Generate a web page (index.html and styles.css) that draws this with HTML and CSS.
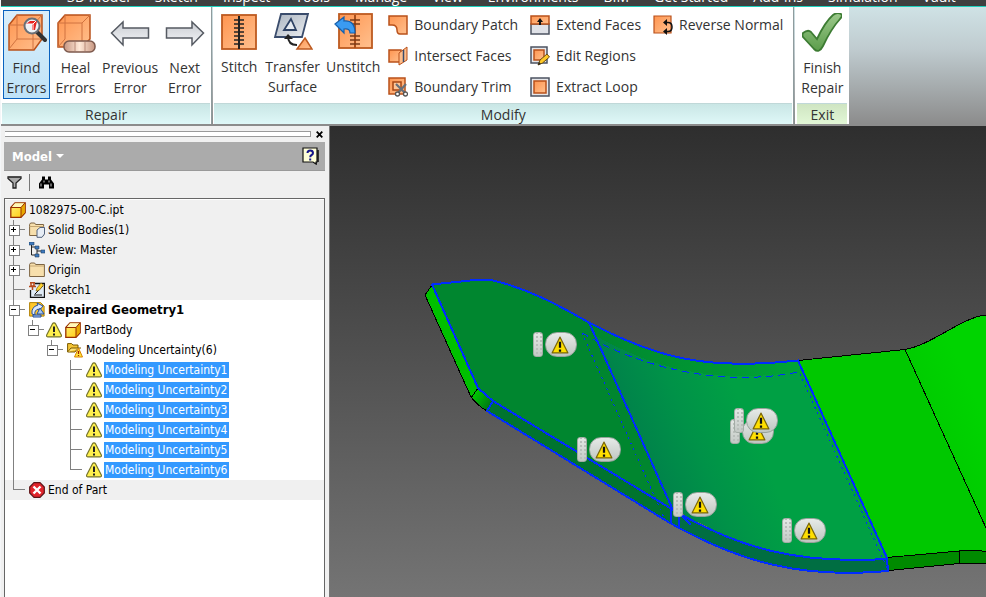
FILE: index.html
```html
<!DOCTYPE html>
<html lang="en">
<head>
<meta charset="utf-8">
<title>Repair – 1082975-00-C.ipt</title>
<link rel="stylesheet" href="styles.css">
</head>
<body>
<svg class="defs" aria-hidden="true">
  <defs>
    <linearGradient id="orange" x1="0" y1="0" x2="1" y2="1"><stop offset="0" stop-color="#ff9550"/><stop offset="1" stop-color="#ffc08e"/></linearGradient>
    <linearGradient id="silver" x1="0" y1="0" x2="1" y2="1"><stop offset="0" stop-color="#aab4c0"/><stop offset="1" stop-color="#eceef1"/></linearGradient>
    <linearGradient id="arrow" x1="0" y1="0" x2="0" y2="1"><stop offset="0" stop-color="#c9ccd2"/><stop offset="1" stop-color="#f4f5f7"/></linearGradient>
    <linearGradient id="tick" x1="0" y1="0" x2="0" y2="1"><stop offset="0" stop-color="#9cc98b"/><stop offset="1" stop-color="#5c9d4b"/></linearGradient>
    <linearGradient id="band" x1="0" y1="0" x2="1" y2="0"><stop offset="0" stop-color="#c69580"/><stop offset=".5" stop-color="#ffe9d8"/><stop offset="1" stop-color="#c69580"/></linearGradient>
    <linearGradient id="gold" x1="0" y1="0" x2="1" y2="1"><stop offset="0" stop-color="#fff27a"/><stop offset="1" stop-color="#ffc90a"/></linearGradient>
    <linearGradient id="bend" gradientUnits="userSpaceOnUse" x1="620" y1="450" x2="740" y2="400"><stop offset="0" stop-color="#007c4b"/><stop offset=".55" stop-color="#009248"/><stop offset="1" stop-color="#00a044"/></linearGradient>
    <linearGradient id="bendedge" gradientUnits="userSpaceOnUse" x1="590" y1="0" x2="790" y2="0"><stop offset="0" stop-color="#00862f"/><stop offset="1" stop-color="#00a336"/></linearGradient>
    <linearGradient id="corner" gradientUnits="userSpaceOnUse" x1="474" y1="394" x2="492" y2="406"><stop offset="0" stop-color="#00c800"/><stop offset="1" stop-color="#006e18"/></linearGradient>
    <linearGradient id="far" gradientUnits="userSpaceOnUse" x1="920" y1="450" x2="986" y2="420"><stop offset="0" stop-color="#00c800"/><stop offset="1" stop-color="#00d400"/></linearGradient>
    <symbol id="warn" viewBox="0 0 16 16"><path d="M8 .8q1 0 1.500 1L15.300 13q.6 1.700-1 1.900H1.700Q.1 14.700.7 13L6.500 1.800Q7 .8 8 .8z" fill="#fff04d" stroke="#77752c" stroke-width="1.200"/><path d="M7 4.500h2v5.500H7zM7 11.500h2v2H7z" fill="#222"/></symbol>
    <symbol id="warn2" viewBox="0 0 16 16"><path d="M8 1l7 14H1z" fill="#ffdf00" stroke="#7a6708" stroke-linejoin="round"/><path d="M7 5h2v5.500H7zM7 12h2v2H7z" fill="#111"/></symbol>
    <symbol id="part" viewBox="0 0 16 16"><path d="M.8 5.500L5 .8h10.200v10L11 15.300H.8z" fill="url(#gold)" stroke="#983000" stroke-width="1.300"/><path d="M5 1.300h9.500L11 5.500H1.500z" fill="#fff8b8"/><path d="M11 5.500l3.800-4.200v9.200L11 14.800z" fill="#e8a900"/><path d="M.8 5.500H11v9.800M11 5.500L15 .8" fill="none" stroke="#983000"/></symbol>
  </defs>
</svg>

<nav class="tabs">
  <a href="#">3D Model</a><a href="#">Sketch</a><a href="#">Inspect</a><a href="#">Tools</a><a href="#">Manage</a><a href="#">View</a><a href="#">Environments</a><a href="#">BIM</a><a href="#">Get Started</a><a href="#">Add-Ins</a><a href="#">Simulation</a><a href="#">Vault</a>
</nav>

<header class="ribbon">
  <section class="panel repair">
    <div class="tools">
      <button class="big active">
        <svg viewBox="0 0 40 40"><path d="M2 12L10 2h25v24l-8 11H2z" fill="url(#orange)" stroke="#b9511b" stroke-width="1.500"/><path d="M2 12h24v24M26 12l9-10M10 2v24L2 36M10 26h24" fill="none" stroke="#d07340"/><path d="M30 19l8 8" stroke="#333" stroke-width="4" stroke-linecap="round"/><circle cx="25" cy="13" r="7.500" fill="#eef2f5" stroke="#6b6f75" stroke-width="2"/><path d="M19 11l4-3h7l-2 9h-3v-6z" fill="#e8231f"/><path d="M20 11h6l3-3M26 11v6" fill="none" stroke="#fff"/></svg>
        <span>Find<br>Errors</span>
      </button>
      <button class="big">
        <svg viewBox="0 0 40 40"><path d="M2 10L9 2h25v24l-8 8H2z" fill="url(#orange)" stroke="#b9511b" stroke-width="1.500"/><path d="M2 10h24v24M26 10l8-8M9 2v24L2 34" fill="none" stroke="#d07340"/><rect x="8" y="28" width="31" height="11" rx="5" fill="url(#band)" stroke="#7d5a4e" stroke-width="1.500"/><path d="M19 29v9M29 29v9" stroke="#b88a78"/></svg>
        <span>Heal<br>Errors</span>
      </button>
      <button class="big">
        <svg viewBox="0 0 40 40"><path d="M1.500 20L13 9v6h25.500v10H13v7z" fill="url(#arrow)" stroke="#555a62" stroke-width="1.500"/></svg>
        <span>Previous<br>Error</span>
      </button>
      <button class="big">
        <svg viewBox="0 0 40 40"><path d="M38.500 20L27 9v6H1.500v10H27v7z" fill="url(#arrow)" stroke="#555a62" stroke-width="1.500"/></svg>
        <span>Next<br>Error</span>
      </button>
    </div>
    <h2>Repair</h2>
  </section>

  <section class="panel modify">
    <div class="tools">
      <button class="big">
        <svg viewBox="0 0 40 40"><rect x="3" y="3" width="34" height="34" fill="url(#orange)" stroke="#bd5a20" stroke-width="1.800"/><path d="M20 4v33" stroke="#222" stroke-width="2"/><path d="M15 8h10M15 12h10M15 16h10M15 20h10M15 24h10M15 28h10M15 32h10" stroke="#222" stroke-width="1.500"/></svg>
        <span>Stitch</span>
      </button>
      <button class="big">
        <svg viewBox="0 0 40 40"><path d="M8 2h27l-6 23H2z" fill="url(#silver)" stroke="#3a4c6c" stroke-width="1.800"/><path d="M18 7l5 11H11z" fill="#e7ebf0" stroke="#2e4264" stroke-width="1.800"/><path d="M32 26l7 11H24z" fill="url(#orange)" stroke="#bd5a20" stroke-width="1.500"/><path d="M15 24q0 9 9 9" fill="none" stroke="#222" stroke-width="2"/><path d="M11 27l4-5 5 5z" fill="#222"/></svg>
        <span>Transfer<br>Surface</span>
      </button>
      <button class="big">
        <svg viewBox="0 0 40 40"><rect x="6" y="2" width="33" height="34" fill="url(#orange)" stroke="#bd5a20" stroke-width="1.800"/><path d="M22 3v33" stroke="#a94f1c" stroke-width="2"/><path d="M17 8h10M17 12h10M17 24h10M17 28h10M17 32h10" stroke="#7a3b19" stroke-width="1.500"/><path d="M2 12l9-7v4q11-1 11 12h-5q0-5-6-4v4z" fill="#3a9bf2" stroke="#1560ad" stroke-width="1.200"/></svg>
        <span>Unstitch</span>
      </button>
      <div class="stack">
        <button class="small"><svg viewBox="0 0 20 20"><path d="M1 1h18v18h-7q-3 0-3-4 0-5-5-5H1z" fill="url(#orange)" stroke="#b9511b" stroke-width="1.500"/></svg>Boundary Patch</button>
        <button class="small"><svg viewBox="0 0 20 20"><path d="M1 4h12v12H1z" fill="url(#orange)" stroke="#b9511b" stroke-width="1.500"/><path d="M11 7l8-6v13l-8 5z" fill="#ffbd8a" stroke="#b9511b"/><path d="M15.500 4v12" stroke="#3a4c6c" stroke-width="1.500"/></svg>Intersect Faces</button>
        <button class="small"><svg viewBox="0 0 20 20"><path d="M1 1h16v16H1z" fill="url(#orange)" stroke="#b9511b" stroke-width="1.500"/><path d="M5 5h8v8H5z" fill="#ffc596" stroke="#a74614" stroke-width="1.500"/><path d="M8 7l9 9M18 7l-8 9" stroke="#68707a" stroke-width="2.200"/><circle cx="9.500" cy="17" r="2" fill="#fff" stroke="#555" stroke-width="1.300"/><circle cx="17.500" cy="17" r="2" fill="#fff" stroke="#555" stroke-width="1.300"/></svg>Boundary Trim</button>
      </div>
      <div class="stack">
        <button class="small"><svg viewBox="0 0 20 20"><path d="M1 9h18v10H1z" fill="#dfe1e7" stroke="#4c5361" stroke-width="1.500"/><path d="M1 1h18v8H1z" fill="url(#orange)" stroke="#b9511b" stroke-width="1.500"/><path d="M10 3l3 4h-2v3H9V7H7z" fill="#111"/></svg>Extend Faces</button>
        <button class="small"><svg viewBox="0 0 20 20"><path d="M1 1h16v16H1z" fill="#e6e7ea" stroke="#4c5361" stroke-width="1.500"/><path d="M4 4h10v10H4z" fill="url(#orange)" stroke="#b9511b" stroke-width="1.500"/><path d="M8 19l2-5 7-6 2.500 3-7 6z" fill="#ffc928" stroke="#684c12"/><path d="M8 19l1-3 2 2z" fill="#222"/></svg>Edit Regions</button>
        <button class="small"><svg viewBox="0 0 20 20"><path d="M1 1h18v18H1z" fill="#e6e7ea" stroke="#4c5361" stroke-width="1.500"/><path d="M4 4h12v12H4z" fill="url(#orange)" stroke="#b9511b" stroke-width="1.500"/></svg>Extract Loop</button>
      </div>
      <div class="stack">
        <button class="small"><svg viewBox="0 0 20 20"><path d="M1 1h17v17H1z" fill="url(#orange)" stroke="#b9511b" stroke-width="1.200"/><path d="M13 7.500h2q4 0 4 4.500t-4 4.500h-2" fill="none" stroke="#111" stroke-width="1.500"/><path d="M14 4v7l-4-3.500zM14 13v7l-4-3.500z" fill="#111"/></svg>Reverse Normal</button>
      </div>
    </div>
    <h2>Modify</h2>
  </section>

  <section class="panel exit">
    <div class="tools">
      <button class="big">
        <svg viewBox="0 0 40 40"><path d="M1 20q5-4 8-1l6 7Q23 9 31 2q4-3 8-1 2 2-1 5-9 10-17 27-4 8-9 3L1 24q-1-2 0-4z" fill="url(#tick)" stroke="#3d7c33" stroke-width="1.800"/></svg>
        <span>Finish<br>Repair</span>
      </button>
    </div>
    <h2>Exit</h2>
  </section>
</header>

<main>
  <aside class="browser">
    <div class="grip"><i></i><button aria-label="Close"><svg viewBox="0 0 7 7"><path d="M.7.7l5.600 5.600M6.300.7L.7 6.300" stroke="#000" stroke-width="1.800"/></svg></button></div>
    <div class="head">
      <button class="title">Model<svg viewBox="0 0 8 4"><path d="M0 0h8L4 4z" fill="#fff"/></svg></button>
      <button class="help" aria-label="Help"><svg viewBox="0 0 18 18"><path d="M3 3h14v12h-2v3l-4-3H3z" fill="#333"/><path d="M1 1h14v14h-1v2l-3-2H1z" fill="#ffffd8" stroke="#111" stroke-width="1.200"/><path d="M5.500 6q0-2.500 2.700-2.500T11 6q0 1.300-1.400 2T8.200 10.200" fill="none" stroke="#171789" stroke-width="2"/><path d="M7.200 11.500h2v2h-2z" fill="#171789"/></svg></button>
    </div>
    <div class="filters">
      <button aria-label="Filter"><svg viewBox="0 0 15 15"><path d="M1 2h13v1.500L9 8v5H6V8L1 3.500z" fill="#aaa" stroke="#222" stroke-width="1.300"/><path d="M1 2h13" stroke="#444"/></svg></button>
      <button aria-label="Find"><svg viewBox="0 0 15 14"><path d="M3 1h3v3h3V1h3v3l3 4v5h-5V9H5v4H0V8l3-4z" fill="#000"/><path d="M2 8v3M12 8v3M5 5v2M10 5v2" stroke="#fff" stroke-width=".8"/></svg></button>
    </div>
    <ul class="tree">
      <li><svg><use href="#part"/></svg><span>1082975-00-C.ipt</span></li>
      <li><i class="g tee plus"></i><svg viewBox="0 0 16 16"><path d="M.6 13.500V2.500l1-1.500h4l1 1.500h8v11z" fill="#f7dfac" stroke="#7d6544"/><path d="M.6 4.500h14" stroke="#c5a672"/><path d="M8 8l3-2.500h4.500V12L13 15.300H8z" fill="#e7edf5" stroke="#53637d"/></svg><span>Solid Bodies(1)</span></li>
      <li><i class="g tee plus"></i><svg viewBox="0 0 16 16"><path d="M2.500 2v11h4M2.500 5h4M8 5v8M8 9h5" fill="none" stroke="#222"/><path d="M0 0h5v3H0zM6 4h4v3H6zM12 8h4v3h-4zM6 12h4v3H6z" fill="#3c7ac0" stroke="#24415f" stroke-width=".6"/></svg><span>View: Master</span></li>
      <li><i class="g tee plus"></i><svg viewBox="0 0 16 16"><path d="M.6 14.500v-12l1-1.500h4l1 1.500h8.800v12z" fill="#f7dfac" stroke="#7d6544"/><path d="M1 4h14" stroke="#c5a672"/></svg><span>Origin</span></li>
      <li><i class="g tee"></i><svg viewBox="0 0 16 16"><path d="M1.500 8v7.400h14V1.500H6" fill="#dfeaf5" stroke="#111" stroke-width="1.300"/><path d="M6 12l8-8M5 13h8" stroke="#111"/><path d="M7 9l1-3 4-5 2.500 2-4 5z" fill="#ffd431" stroke="#876310" stroke-width=".7"/><path d="M1 .8h5M2 1v3h3V1M0 4.500h7M3.500 5v3" fill="none" stroke="#b5481c" stroke-width="1.500"/></svg><span>Sketch1</span></li>
      <li class="open bold"><i class="g tee minus"></i><svg viewBox="0 0 16 16"><path d="M.6.6h11l3.500 3.500v10H.6z" fill="#ffc72b" stroke="#b38307"/><path d="M3 12q-1-7 6-9l-1-2 6 3-4 5-.5-2Q5 8 6 13z" fill="#dbe7fa" stroke="#244f9e"/><path d="M8 12l3-6 4 6zM4 13h8v2H4z" fill="#a7c6f0" stroke="#244f9e"/></svg><span>Repaired Geometry1</span></li>
      <li class="open tight"><i class="g pass"></i><i class="g last minus"></i><svg><use href="#warn"/></svg><svg><use href="#part"/></svg><span>PartBody</span></li>
      <li class="open"><i class="g pass"></i><i class="g"></i><i class="g last minus"></i><svg viewBox="0 0 16 16"><path d="M.6 10V1.600h4L6 3h5v3l-3 4z" fill="#f4c536" stroke="#7a5900"/><path d="M.6 10L4 6h10" fill="#ffe47a" stroke="#7a5900"/><path d="M11.500 6l4 9h-8z" fill="#ffe839" stroke="#d98000"/><path d="M11.500 9v3M11.500 13v1" stroke="#a31d00" stroke-width="1.300"/></svg><span>Modeling Uncertainty(6)</span></li>
      <li class="open sel"><i class="g pass"></i><i class="g"></i><i class="g"></i><i class="g tee"></i><svg><use href="#warn"/></svg><span>Modeling Uncertainty1</span></li>
      <li class="open sel"><i class="g pass"></i><i class="g"></i><i class="g"></i><i class="g tee"></i><svg><use href="#warn"/></svg><span>Modeling Uncertainty2</span></li>
      <li class="open sel"><i class="g pass"></i><i class="g"></i><i class="g"></i><i class="g tee"></i><svg><use href="#warn"/></svg><span>Modeling Uncertainty3</span></li>
      <li class="open sel"><i class="g pass"></i><i class="g"></i><i class="g"></i><i class="g tee"></i><svg><use href="#warn"/></svg><span>Modeling Uncertainty4</span></li>
      <li class="open sel"><i class="g pass"></i><i class="g"></i><i class="g"></i><i class="g tee"></i><svg><use href="#warn"/></svg><span>Modeling Uncertainty5</span></li>
      <li class="open sel"><i class="g pass"></i><i class="g"></i><i class="g"></i><i class="g last"></i><svg><use href="#warn"/></svg><span>Modeling Uncertainty6</span></li>
      <li><i class="g last"></i><svg viewBox="0 0 16 16"><path d="M5 .7h6L15.300 5v6L11 15.300H5L.7 11V5z" fill="#e0242b" stroke="#5b1216" stroke-width="1.200"/><path d="M4.500 4.500l7 7M11.500 4.500l-7 7" stroke="#fff" stroke-width="2.400"/></svg><span>End of Part</span></li>
    </ul>
  </aside>

  <div class="viewport">
    <svg class="scene" viewBox="330 126 656 471" preserveAspectRatio="xMinYMin slice" shape-rendering="crispEdges">
      <path d="M798 360.500L905 349.500L986 528V551.500L975 550L887 558z" fill="#00c800"/>
      <path d="M905 349.500C932 345 962 317 986 315V528z" fill="url(#far)"/>
      <path d="M887 558L959 551H986V563H959L888 571z" fill="#008a00"/>
      <path d="M432 285L425 295L471 397L478 389z" fill="#00c000"/>
      <path d="M478 388L471 397Q478 406 487 411L493 401z" fill="url(#corner)"/>
      <path d="M432 284.500L475 280H491C527 288 558 305 589 322.500L672 508L493 401L478 388z" fill="#00862f"/>
      <path d="M589 322.500C660 360 710 370 798 360.500L887 559C800 565 740 548 672 508z" fill="url(#bendedge)"/>
      <path d="M594 335C650 366 705 385 798 372L887 559C800 565 740 548 672 508z" fill="url(#bend)"/>
      <path d="M493 401L670 508V523L487 411z" fill="#00742f"/>
      <path d="M670 508C740 550 800 564 887 559L888 571C800 579 740 562 670 523z" fill="#006e42"/>
      <g fill="none" stroke="#000" stroke-width="1">
        <path d="M432 285L425 295L471 397Q478 406 487 411M478 388L471 398"/>
        <path d="M798 360.500L905 349.500C932 345 962 317 986 315M905 349.500L986 528M887 557.500L959 551L975 550L986 551.500M889 570.500L959 563.500H986M959.500 551V563"/>
      </g>
      <g fill="none" stroke="#002cff" stroke-width="2">
        <path d="M493 401L478 388L432 284.500L475 280H491C527 288 558 305 589 322.500C660 360 710 370 798 360.500L887 558L888 571C800 579 740 562 670 523L487 411L493 401L670 508C740 550 800 564 887 559"/>
        <path d="M589 322.500L672 508M670.500 508V523M678.500 516V528M682 516L691 525"/>
      </g>
      <g fill="none" stroke="#002cff" stroke-width="1">
        <path d="M582 333L608 347C660 371 730 386 798 372" stroke-dasharray="7 5"/>
        <path d="M582 333L665 520M800 374L887 568" stroke-dasharray="2 4"/>
      </g>
    </svg>
    <button class="marker m1" aria-label="Modeling Uncertainty1"><i></i><b><svg><use href="#warn2"/></svg></b></button>
    <button class="marker m2" aria-label="Modeling Uncertainty2"><i></i><b><svg><use href="#warn2"/></svg></b></button>
    <button class="marker m3" aria-label="Modeling Uncertainty3"><i></i><b><svg><use href="#warn2"/></svg></b></button>
    <button class="marker m4" aria-label="Modeling Uncertainty4"><i></i><b><svg><use href="#warn2"/></svg></b></button>
    <button class="marker m5" aria-label="Modeling Uncertainty5"><i></i><b><svg><use href="#warn2"/></svg></b></button>
    <button class="marker m6" aria-label="Modeling Uncertainty6"><i></i><b><svg><use href="#warn2"/></svg></b></button>
  </div>
</main>
</body>
</html>
```
FILE: styles.css
```css
* { box-sizing: border-box; }

body {
  margin: 0;
  padding-left: 1px;
  min-height: 100vh;
  display: flex;
  flex-direction: column;
  background: #f4f6f8;
  color: #333;
  font-family: "Open Sans", "Noto Sans", sans-serif;
  font-size: 14px;
}

button {
  margin: 0;
  padding: 0;
  border: 0;
  background: none;
  color: inherit;
  font: inherit;
}

svg { display: block; flex: none; }
.defs { position: absolute; width: 0; height: 0; }

/* tab strip */
.tabs {
  height: 7px;
  display: flex;
  align-items: flex-end;
  gap: 25px;
  padding-left: 66px;
  overflow: hidden;
  background: #3f3f3f;
  border-bottom: 1px solid #1fd0bd;
}
.tabs a {
  flex: none;
  line-height: 18px;
  color: #fff;
  text-decoration: none;
  white-space: nowrap;
}

/* ribbon */
.ribbon {
  display: flex;
  gap: 1px;
  border-bottom: 2px solid #8c8c8c;
  background: linear-gradient(#cfe2e5, #c0ccd0 35%, #8c8c8c);
}
.panel {
  display: flex;
  flex-direction: column;
  background: #fff;
  padding: 0 1px;
  border-right: 1px solid #8f9c9e;
}
.panel h2 {
  margin: 0;
  height: 21px;
  line-height: 22px;
  font-size: 14px;
  font-weight: 400;
  text-align: center;
  border-top: 1px solid #c0d8d8;
  background: linear-gradient(#c9e6e5, #dff8f8);
}
.exit { border-right: 0; padding: 0 2px; }
.exit h2 { background: linear-gradient(#cfe5c2, #e2f7d6); }
.tools {
  height: 96px;
  display: flex;
  align-items: flex-start;
  padding-top: 3px;
}
.big {
  display: flex;
  flex-direction: column;
  align-items: center;
  height: 89px;
  padding-top: 2px;
  line-height: 20px;
  border: 1px solid transparent;
}
.big svg { width: 40px; height: 40px; margin-bottom: 5px; }
.big.active {
  border-color: #0a62bf;
  background: linear-gradient(#d9eefa, #bfe3f8);
}
.repair .tools { gap: 2px; padding-left: 1px; padding-right: 2px; }
.repair .big { min-width: 47px; }
.modify .tools { gap: 4px; padding: 2px 4px 0; }
.exit .tools { padding-left: 3px; padding-right: 3px; }
.stack { display: flex; flex-direction: column; margin-left: 3px; margin-right: 5px; }
.small {
  display: flex;
  align-items: center;
  gap: 6px;
  height: 31px;
  white-space: nowrap;
}
.small svg { width: 20px; height: 20px; }

/* model browser */
main { flex: 1; display: flex; }
.browser {
  width: 328px;
  flex: none;
  display: flex;
  flex-direction: column;
  padding: 0 4px 0 3px;
  background: #f0f0f0;
  color: #000;
  font-family: "DejaVu Sans Condensed", "DejaVu Sans", sans-serif;
  font-size: 12px;
}
.grip {
  height: 16px;
  display: flex;
  align-items: center;
  gap: 5px;
  padding: 0 2px 0 1px;
}
.grip i { flex: 1; height: 6px; border: 1px solid #999; border-left: 0; background: #fff; }
.grip svg { width: 7px; height: 7px; }
.head {
  height: 29px;
  display: flex;
  align-items: center;
  justify-content: space-between;
  padding: 0 5px 0 8px;
  background: #ababab;
  border-bottom: 1px solid #999;
}
.title {
  display: flex;
  align-items: center;
  gap: 4px;
  color: #fff;
  font-size: 13px;
  font-weight: 700;
}
.title svg { width: 8px; height: 4px; }
.help svg { width: 18px; height: 18px; }
.filters { height: 27px; display: flex; align-items: center; padding: 0 0 4px 3px; }
.filters button { padding-right: 7px; }
.filters button + button { padding: 1px 0 1px 9px; border-left: 1px solid #777; }
.filters svg { width: 15px; height: 15px; }

.tree {
  flex: 1;
  margin: 0;
  padding: 1px 0 0;
  list-style: none;
  background: #fff;
  border: 1px solid #666;
  border-bottom: 0;
}
.tree li {
  height: 20px;
  display: flex;
  align-items: center;
  background: #f0f0f0;
  white-space: nowrap;
}
.tree li.open { background: #fff; }
.tree svg { width: 16px; height: 16px; margin-left: 5px; }
.tree .tight svg { margin-left: 3px; }
.tree span { margin-left: 2px; padding: 0 0 0 1px; line-height: 16px; }
.bold { font-weight: 700; font-size: 13px; }
.tree .sel span { background: #39f; color: #fff; padding: 0 2px 0 1px; }

/* tree guides: one cell per level, its line 8px from the left */
.g { position: relative; width: 19px; height: 20px; flex: none; }
.pass, .tee { background: linear-gradient(#808080, #808080) 8px 0 / 1px 100% no-repeat; }
.last { background: linear-gradient(#808080, #808080) 8px 0 / 1px 10px no-repeat; }
.tee::before, .last::before {
  content: "";
  position: absolute;
  left: 8px;
  top: 9px;
  width: 12px;
  height: 1px;
  background: #808080;
}
.plus::after, .minus::after {
  content: "";
  position: absolute;
  left: 4px;
  top: 5px;
  width: 9px;
  height: 9px;
  border: 1px solid #808080;
}
.plus::after {
  background:
    linear-gradient(#000, #000) 3px 1px / 1px 5px no-repeat,
    linear-gradient(#000, #000) 1px 3px / 5px 1px no-repeat, #fff;
}
.minus::after { background: linear-gradient(#000, #000) 1px 3px / 5px 1px no-repeat, #fff; }

/* model view */
.viewport {
  position: relative;
  flex: 1;
  min-width: 0;
  overflow: hidden;
  border-left: 1px solid #777;
  background: linear-gradient(#2e2e2e, #747474);
}
.scene { position: absolute; inset: 0; width: 100%; height: 100%; }
.marker { position: absolute; display: flex; gap: 2px; }
.marker i {
  width: 10px;
  height: 25px;
  border: 1px solid #a3ada6;
  border-radius: 3px;
  background: radial-gradient(circle, #b9bfbb 1px, transparent 1px) 1px 2px / 4px 4px, linear-gradient(#e4e8e5, #c3c9c5);
}
.marker b {
  display: flex;
  justify-content: center;
  padding: 3px 3px 0 0;
  width: 32px;
  height: 25px;
  border: 1px solid #97a39b;
  border-radius: 12px;
  background: linear-gradient(#e6eae7, #bfc6c1);
}
.marker svg { width: 18px; height: 18px; }
.m1 { left: 203px; top: 206px; }
.m2 { left: 247px; top: 311px; }
.m3 { left: 343px; top: 366px; }
.m4 { left: 452px; top: 392px; }
.m5 { left: 400px; top: 293px; }
.m6 { left: 404px; top: 282px; }
```
